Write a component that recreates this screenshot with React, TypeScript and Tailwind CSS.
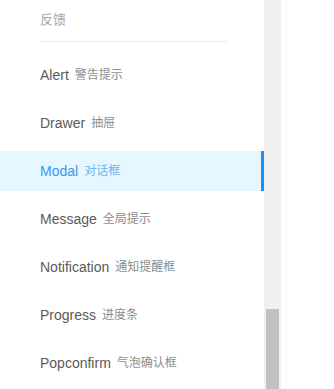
import React from 'react';

const items = [
  { en: 'Alert', zh: '警告提示' },
  { en: 'Drawer', zh: '抽屉' },
  { en: 'Modal', zh: '对话框', active: true },
  { en: 'Message', zh: '全局提示' },
  { en: 'Notification', zh: '通知提醒框' },
  { en: 'Progress', zh: '进度条' },
  { en: 'Popconfirm', zh: '气泡确认框' },
];

const App: React.FC = () => {
  return (
    <div
      className="flex h-[389px] w-[334px] overflow-hidden bg-white"
      style={{ fontFamily: '"Liberation Sans", "Noto Sans CJK SC", sans-serif' }}
    >
      {/* menu */}
      <div className="w-[264px] shrink-0">
        <div className="pl-10 pt-[9px] text-[13px] leading-[22px] text-[#a6a6a6]">反馈</div>
        <div className="ml-10 mt-[10px] h-px w-[188px] bg-[#ececec]" />
        <ul className="mt-[13px] flex flex-col gap-2">
          {items.map((item) => (
            <li
              key={item.en}
              className={`flex h-10 items-center pl-10 ${
                item.active
                  ? 'border-r-[3px] border-[#1890ff] bg-[#e6f7ff] text-[#3a98f0]'
                  : 'text-[#5a5a5a]'
              }`}
            >
              <span className="text-[14px]">{item.en}</span>
              <span className="ml-[6px] text-[12px] opacity-70">{item.zh}</span>
            </li>
          ))}
        </ul>
      </div>
      {/* scrollbar */}
      <div className="flex w-[17px] shrink-0 flex-col bg-[#f0f0f0] px-[2px] pt-[309px]">
        <div className="flex-1 bg-[#c1c1c1]" />
      </div>
      <div className="w-[5px] shrink-0" />
      <div className="w-px shrink-0 bg-[#f7f7f7]" />
      <div className="flex-1" />
    </div>
  );
};

export default App;
